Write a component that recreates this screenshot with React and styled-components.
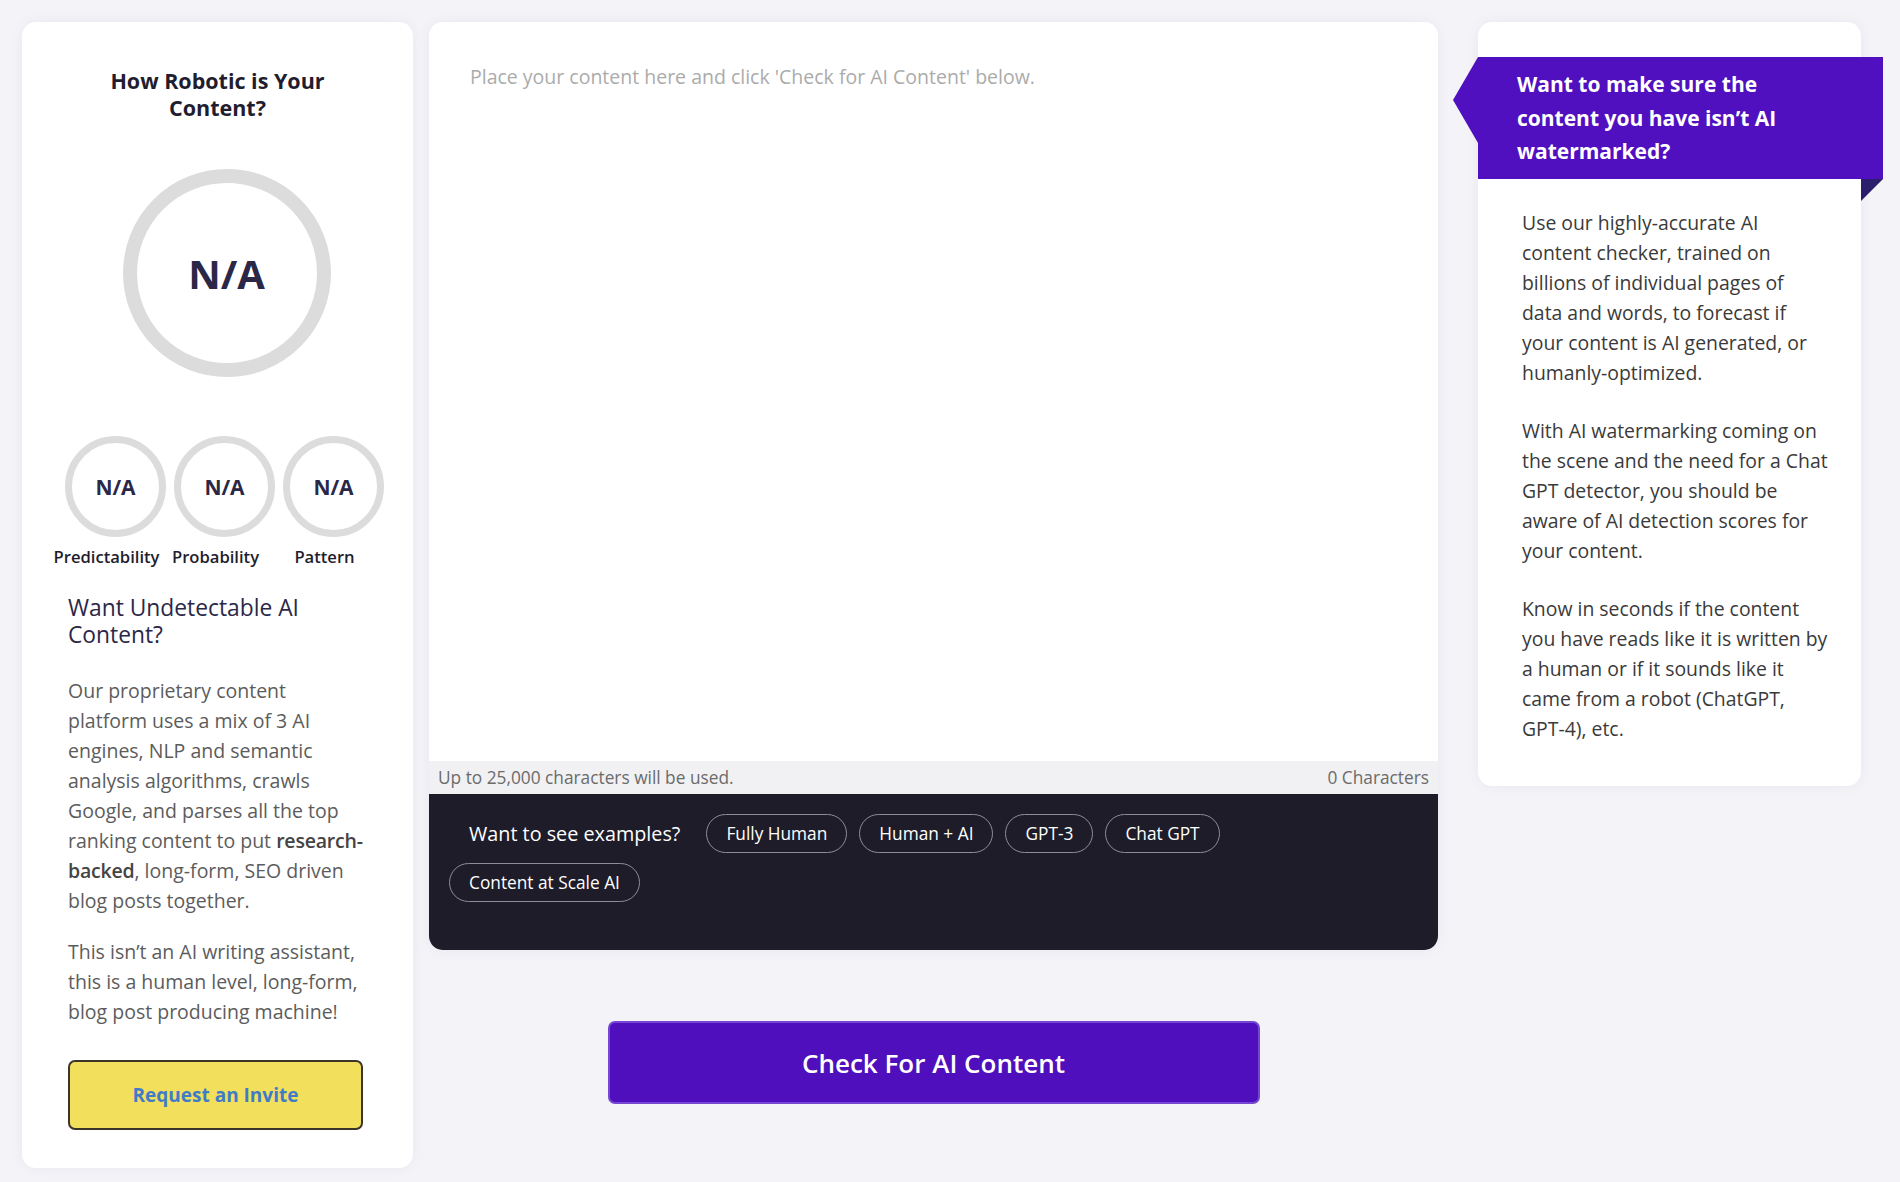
import React from 'react';
import styled, { createGlobalStyle } from 'styled-components';

const GlobalStyle = createGlobalStyle`
	body {
		margin: 0;
		background: #f3f3f8;
		font-family: 'Open Sans', 'Noto Sans', sans-serif;
	}
`;

const PageStyles = styled.div`
	display: flex;
	align-items: flex-start;
	padding: 22px 0 0 22px;
	min-height: 1160px;
`;

const Card = styled.div`
	background: #fff;
	border-radius: 14px;
	box-shadow: 0 0 14px rgba(40, 40, 80, 0.05);
`;

const LeftCard = styled(Card)`
	width: 391px;
	box-sizing: border-box;
	padding: 45px 46px 38px;
	display: flex;
	flex-direction: column;
`;

const ScoreTitle = styled.h2`
	margin: 0 auto;
	width: 240px;
	text-align: center;
	font-size: 21.5px;
	line-height: 27px;
	font-weight: 700;
	color: #1f1d2e;
`;

const Ring = styled.div`
	width: ${p => p.size}px;
	height: ${p => p.size}px;
	box-sizing: border-box;
	border-radius: 50%;
	border: ${p => p.stroke}px solid #dcdcdc;
	display: flex;
	align-items: center;
	justify-content: center;
	font-size: ${p => p.fontSize}px;
	font-weight: 700;
	color: #2b2847;
	flex-shrink: 0;
`;

const BigRingWrap = styled.div`
	display: flex;
	justify-content: center;
	margin: 48px 0 0 18px;
`;

const MetersRow = styled.div`
	display: flex;
	gap: 8px;
	margin: 59px 0 0 -3px;
`;

const Meter = styled.div`
	display: flex;
	flex-direction: column;
	align-items: center;
	width: 101px;
`;

const MeterLabel = styled.span`
	margin: 10px 18px 0 0;
	font-size: 16.6px;
	line-height: 20px;
	font-weight: 600;
	color: #1f1d2e;
	white-space: nowrap;
`;

const SideHeading = styled.h3`
	margin: 27px 0 0;
	font-size: 22.8px;
	line-height: 27px;
	font-weight: 500;
	color: #2b2847;
`;

const SideText = styled.p`
	margin: ${p => p.top}px 0 0;
	font-size: 19.5px;
	line-height: 30px;
	color: #5c5c5c;
	b {
		font-weight: 600;
		letter-spacing: -0.2px;
		color: #444;
	}
`;

const InviteButton = styled.button`
	margin-top: 33px;
	width: 295px;
	height: 70px;
	background: #f2df5c;
	border: 2px solid #3a3528;
	border-radius: 7px;
	font-family: inherit;
	font-size: 19px;
	font-weight: 700;
	color: #3f7bc8;
	cursor: pointer;
`;

const CenterColumn = styled.div`
	width: 1009px;
	margin-left: 16px;
	display: flex;
	flex-direction: column;
	align-items: center;
`;

const EditorPanel = styled(Card)`
	width: 100%;
	overflow: hidden;
	display: flex;
	flex-direction: column;
`;

const ContentArea = styled.textarea`
	height: 739px;
	box-sizing: border-box;
	padding: 43px 41px 0;
	border: 0;
	resize: none;
	outline: none;
	font-family: inherit;
	font-size: 19.5px;
	line-height: 24px;
	color: #333;
	&::placeholder {
		color: #ababab;
	}
`;

const CountBar = styled.div`
	height: 33px;
	display: flex;
	align-items: center;
	justify-content: space-between;
	padding: 0 9px;
	background: #f1f1f3;
	font-size: 17.3px;
	color: #6b6b6b;
`;

const ExamplesBar = styled.div`
	background: #1e1c29;
	padding: 20px 20px 48px;
	display: flex;
	flex-wrap: wrap;
	align-items: center;
	gap: 10px 12px;
	border-radius: 0 0 12px 12px;
`;

const ExamplesLabel = styled.span`
	margin: 0 14px 0 20px;
	font-size: 19.8px;
	color: #fff;
`;

const Pill = styled.button`
	height: 39px;
	padding: 0 19px;
	background: transparent;
	border: 1px solid #8e8b9b;
	border-radius: 20px;
	font-family: inherit;
	font-size: 17.3px;
	color: #fff;
	cursor: pointer;
`;

const CheckButton = styled.button`
	margin-top: 71px;
	width: 652px;
	height: 83px;
	background: #4f0fbd;
	border: 2px solid #7446d2;
	border-radius: 7px;
	font-family: inherit;
	font-size: 26px;
	font-weight: 600;
	color: #fff;
	cursor: pointer;
`;

const RightCard = styled(Card)`
	width: 383px;
	margin-left: 40px;
	box-sizing: border-box;
	padding: 35px 0 42px;
`;

const Ribbon = styled.div`
	position: relative;
	margin-right: -22px;
	padding: 11px 70px 10px 39px;
	background: #5010c0;
	color: #fff;
	font-size: 21px;
	line-height: 33.5px;
	font-weight: 700;
	&::before {
		content: '';
		position: absolute;
		left: -25px;
		top: 0;
		border-style: solid;
		border-width: 43px 25px 43px 0;
		border-color: transparent #5010c0 transparent transparent;
	}
	&::after {
		content: '';
		position: absolute;
		right: 0;
		bottom: -22px;
		border-style: solid;
		border-width: 22px 22px 0 0;
		border-color: #2a1e6d transparent transparent transparent;
	}
`;

const InfoText = styled.p`
	width: 306.3px;
	margin: ${p => p.top}px 0 0 44px;
	font-size: 19.4px;
	line-height: 30px;
	color: #3a3a3a;
`;

const examples = ['Fully Human', 'Human + AI', 'GPT-3', 'Chat GPT', 'Content at Scale AI'];
const meters = ['Predictability', 'Probability', 'Pattern'];

export default function App() {
	return (
		<PageStyles>
			<GlobalStyle />
			<LeftCard>
				<ScoreTitle>How Robotic is Your Content?</ScoreTitle>
				<BigRingWrap>
					<Ring size={208} stroke={14} fontSize={40}>
						N/A
					</Ring>
				</BigRingWrap>
				<MetersRow>
					{meters.map(name => (
						<Meter key={name}>
							<Ring size={101} stroke={7} fontSize={21}>
								N/A
							</Ring>
							<MeterLabel>{name}</MeterLabel>
						</Meter>
					))}
				</MetersRow>
				<SideHeading>Want Undetectable AI Content?</SideHeading>
				<SideText top={28}>
					Our proprietary content platform uses a mix of 3 AI engines, NLP and semantic
					analysis algorithms, crawls Google, and parses all the top ranking content to put{' '}
					<b>research-backed</b>, long-form, SEO driven blog posts together.
				</SideText>
				<SideText top={21}>
					This isn’t an AI writing assistant, this is a human level, long-form, blog post
					producing machine!
				</SideText>
				<InviteButton>Request an Invite</InviteButton>
			</LeftCard>

			<CenterColumn>
				<EditorPanel>
					<ContentArea placeholder="Place your content here and click 'Check for AI Content' below." />
					<CountBar>
						<span>Up to 25,000 characters will be used.</span>
						<span>0 Characters</span>
					</CountBar>
					<ExamplesBar>
						<ExamplesLabel>Want to see examples?</ExamplesLabel>
						{examples.map(label => (
							<Pill key={label}>{label}</Pill>
						))}
					</ExamplesBar>
				</EditorPanel>
				<CheckButton>Check For AI Content</CheckButton>
			</CenterColumn>

			<RightCard>
				<Ribbon>Want to make sure the content you have isn’t AI watermarked?</Ribbon>
				<InfoText top={29}>
					Use our highly-accurate AI content checker, trained on billions of individual pages
					of data and words, to forecast if your content is AI generated, or
					humanly-optimized.
				</InfoText>
				<InfoText top={28}>
					With AI watermarking coming on the scene and the need for a Chat GPT detector, you
					should be aware of AI detection scores for your content.
				</InfoText>
				<InfoText top={28}>
					Know in seconds if the content you have reads like it is written by a human or if it
					sounds like it came from a robot (ChatGPT, GPT-4), etc.
				</InfoText>
			</RightCard>
		</PageStyles>
	);
}
